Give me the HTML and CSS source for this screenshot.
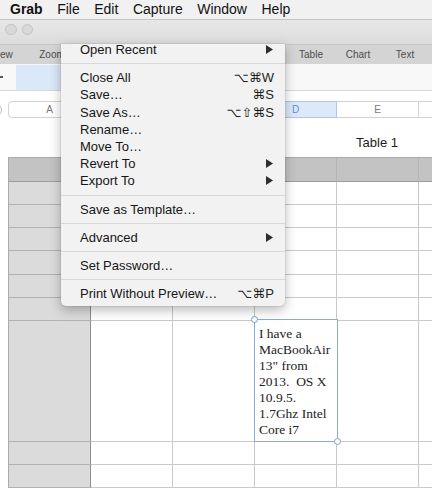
FILE: index.html
```html
<!DOCTYPE html>
<html>
<head>
<meta charset="utf-8">
<link rel="stylesheet" href="styles.css">
</head>
<body>
<div class="screen">
  <div class="menubar">
    <span class="app">Grab</span><span>File</span><span>Edit</span><span>Capture</span><span>Window</span><span>Help</span>
  </div>
  <div class="titlebar"><span class="light"></span><span class="light"></span></div>
  <div class="toolbar">
    <div class="tgroup tleft"><span>View</span><span>Zoom</span></div>
    <div class="tgroup tright"><span>Table</span><span>Chart</span><span>Text</span></div>
  </div>
  <div class="tabbar"><span class="dash"></span><div class="tab"></div></div>
  <div class="colheads">
    <span class="selall"></span>
    <div class="h first">A</div><div class="h">B</div><div class="h">C</div><div class="h sel">D</div><div class="h">E</div><div class="h">F</div>
  </div>
  <div class="ttitle">Table 1</div>
  <div class="tablewrap">
    <div class="grid">
      <div class="c hd rh"></div><div class="c hd"></div><div class="c hd"></div><div class="c hd"></div><div class="c hd"></div><div class="c hd"></div>
      <div class="c rh"></div><div class="c"></div><div class="c"></div><div class="c"></div><div class="c"></div><div class="c"></div>
      <div class="c rh"></div><div class="c"></div><div class="c"></div><div class="c"></div><div class="c"></div><div class="c"></div>
      <div class="c rh"></div><div class="c"></div><div class="c"></div><div class="c"></div><div class="c"></div><div class="c"></div>
      <div class="c rh"></div><div class="c"></div><div class="c"></div><div class="c"></div><div class="c"></div><div class="c"></div>
      <div class="c rh"></div><div class="c"></div><div class="c"></div><div class="c"></div><div class="c"></div><div class="c"></div>
      <div class="c rh"></div><div class="c"></div><div class="c"></div><div class="c"></div><div class="c"></div><div class="c"></div>
      <div class="c rh"></div><div class="c"></div><div class="c"></div><div class="c"></div><div class="c"></div><div class="c"></div>
      <div class="c rh"></div><div class="c"></div><div class="c"></div><div class="c"></div><div class="c"></div><div class="c"></div>
      <div class="c rh"></div><div class="c"></div><div class="c"></div><div class="c"></div><div class="c"></div><div class="c"></div>
    </div>
    <div class="textbox">
      <div class="tbtext">I have a<br>MacBookAir<br>13" from<br>2013.&nbsp; OS X<br>10.9.5.<br>1.7Ghz Intel<br>Core i7</div>
      <span class="handle htl"></span><span class="handle hbr"></span>
    </div>
  </div>

  <div class="menu">
    <div class="item firstitem"><span>Open Recent</span><svg class="arrow" width="7" height="9" viewBox="0 0 7 9"><polygon points="0,0 7,4.5 0,9"/></svg></div>
    <div class="sep"></div>
    <div class="item"><span>Close All</span><span class="sc">⌥⌘W</span></div>
    <div class="item"><span>Save…</span><span class="sc">⌘S</span></div>
    <div class="item"><span>Save As…</span><span class="sc">⌥⇧⌘S</span></div>
    <div class="item"><span>Rename…</span></div>
    <div class="item"><span>Move To…</span></div>
    <div class="item"><span>Revert To</span><svg class="arrow" width="7" height="9" viewBox="0 0 7 9"><polygon points="0,0 7,4.5 0,9"/></svg></div>
    <div class="item"><span>Export To</span><svg class="arrow" width="7" height="9" viewBox="0 0 7 9"><polygon points="0,0 7,4.5 0,9"/></svg></div>
    <div class="sep"></div>
    <div class="item"><span>Save as Template…</span></div>
    <div class="sep"></div>
    <div class="item"><span>Advanced</span><svg class="arrow" width="7" height="9" viewBox="0 0 7 9"><polygon points="0,0 7,4.5 0,9"/></svg></div>
    <div class="sep"></div>
    <div class="item"><span>Set Password…</span></div>
    <div class="sep"></div>
    <div class="item"><span>Print Without Preview…</span><span class="sc">⌥⌘P</span></div>
  </div>
</div>
</body>
</html>
```

FILE: styles.css
```css
html, body {
  margin: 0;
  padding: 0;
  background: #fff;
}
.screen {
  width: 432px;
  height: 488px;
  position: relative;
  overflow: hidden;
  font-family: "Liberation Sans", Arial, "DejaVu Sans", sans-serif;
  background: #fff;
}
.menubar {
  height: 19px;
  border-bottom: 1px solid #c6c6c6;
  background: #f1f1f1;
  display: flex;
  gap: 14.5px;
  padding-left: 10px;
  font-size: 14px;
  line-height: 18px;
  color: #111;
}
.app { font-weight: bold; }
.titlebar {
  height: 25px;
  box-sizing: border-box;
  background: linear-gradient(#e7e7e7, #dcdcdc);
  display: flex;
  gap: 5px;
  padding: 3.5px 0 0 5px;
  border-bottom: 1px solid #c9c9c9;
}
.light {
  width: 11.5px;
  height: 11.5px;
  box-sizing: border-box;
  border-radius: 50%;
  background: #d9d9d9;
  border: 1px solid #c2c2c2;
}
.toolbar {
  height: 19px;
  background: #d4d4d4;
  display: flex;
  justify-content: space-between;
  font-size: 10px;
  line-height: 19px;
  color: #4d4d4d;
}
.tgroup { display: flex; }
.tleft { margin-left: -23px; }
.tleft span { width: 50px; text-align: center; }
.tright { padding-right: 3.5px; }
.tright span { width: 47px; text-align: center; }
.tabbar {
  height: 26px;
  background: #f8f8f8;
  border-bottom: 1px solid #d8d8d8;
  display: flex;
}
.dash {
  width: 3px;
  height: 1.5px;
  background: #555;
  margin-top: 12px;
}
.tab {
  margin-left: 13px;
  width: 160px;
  background: #dbe8fa;
  margin-top: 1px;
}
.colheads {
  height: 27px;
  box-sizing: border-box;
  padding-top: 10px;
  display: flex;
  font-size: 10px;
  line-height: 15px;
  color: #777;
}
.selall {
  width: 14px;
  height: 14px;
  box-sizing: border-box;
  border: 1px solid #bdbdbd;
  border-radius: 50%;
  margin: 1.5px 6px 0 -12px;
  flex: none;
}
.h {
  flex: none;
  width: 82px;
  height: 17px;
  box-sizing: border-box;
  border: 1px solid #d3d3d3;
  border-left: none;
  text-align: center;
  background: #fff;
}
.h.first {
  width: 83px;
  border-left: 1px solid #d3d3d3;
  border-radius: 4px 0 0 4px;
}
.h.sel {
  background: #dde9f9;
  border-color: #afc7ec;
  color: #5b8edb;
}
.ttitle {
  height: 39px;
  box-sizing: border-box;
  padding-top: 16px;
  margin-left: 336px;
  width: 82px;
  text-align: center;
  font-size: 13px;
  line-height: 17px;
  color: #1c1c1c;
}
.tablewrap {
  position: relative;
  margin-left: 8px;
}
.grid {
  display: grid;
  grid-template-columns: 82px 82px 82px 82px 82px 82px;
  grid-template-rows: 24px 23px 23px 23px 24px 23px 23px 121px 23px 23px;
  border-top: 1px solid #a9a9a9;
  border-left: 1px solid #ababab;
}
.c {
  box-sizing: border-box;
  border-right: 1px solid #c9c9c9;
  border-bottom: 1px solid #c9c9c9;
  background: #fff;
}
.c.hd {
  background: #c3c3c3;
  border-bottom-color: #9c9c9c;
  border-right-color: #b4b4b4;
}
.c.rh {
  background: #dbdbdb;
  border-right-color: #8e8e8e;
  border-bottom-color: #b2b2b2;
}
.c.hd.rh {
  background: #c3c3c3;
  border-bottom-color: #9c9c9c;
}
.textbox {
  position: absolute;
  left: 246px;
  top: 162px;
  width: 84px;
  height: 123px;
  box-sizing: border-box;
  border: 1px solid #89a9e0;
  background: #fff;
}
.tbtext {
  padding: 6px 0 0 4px;
  font-family: "Liberation Serif", "Times New Roman", serif;
  font-size: 13.5px;
  line-height: 16px;
  color: #222;
  white-space: nowrap;
}
.handle {
  position: absolute;
  width: 7px;
  height: 7px;
  box-sizing: border-box;
  border: 1px solid #7c9ed8;
  border-radius: 50%;
  background: #fff;
}
.htl { left: -4px; top: -4px; }
.hbr { right: -4px; bottom: -4px; }
.menu {
  position: absolute;
  top: 44px;
  left: 61px;
  width: 224px;
  background: #f2f2f2;
  overflow: hidden;
  padding-bottom: 3.6px;
  border-radius: 0 0 5px 5px;
  box-shadow: 0 4px 12px rgba(0,0,0,0.28), 0 0 0 0.5px rgba(0,0,0,0.12);
  z-index: 10;
  font-size: 13px;
  color: #161616;
}
.item {
  height: 17.2px;
  line-height: 17.2px;
  padding: 0 11px 0 19px;
  display: flex;
  justify-content: space-between;
  align-items: center;
}
.firstitem { margin-top: -3px; }
.sc {
  font-family: "Liberation Sans", "DejaVu Sans", sans-serif;
  color: #1e1e1e;
}
.arrow { fill: #2e2e2e; margin-right: 1px; }
.sep {
  height: 1px;
  background: #d8d8d8;
  margin: 5px 0;
}
```
